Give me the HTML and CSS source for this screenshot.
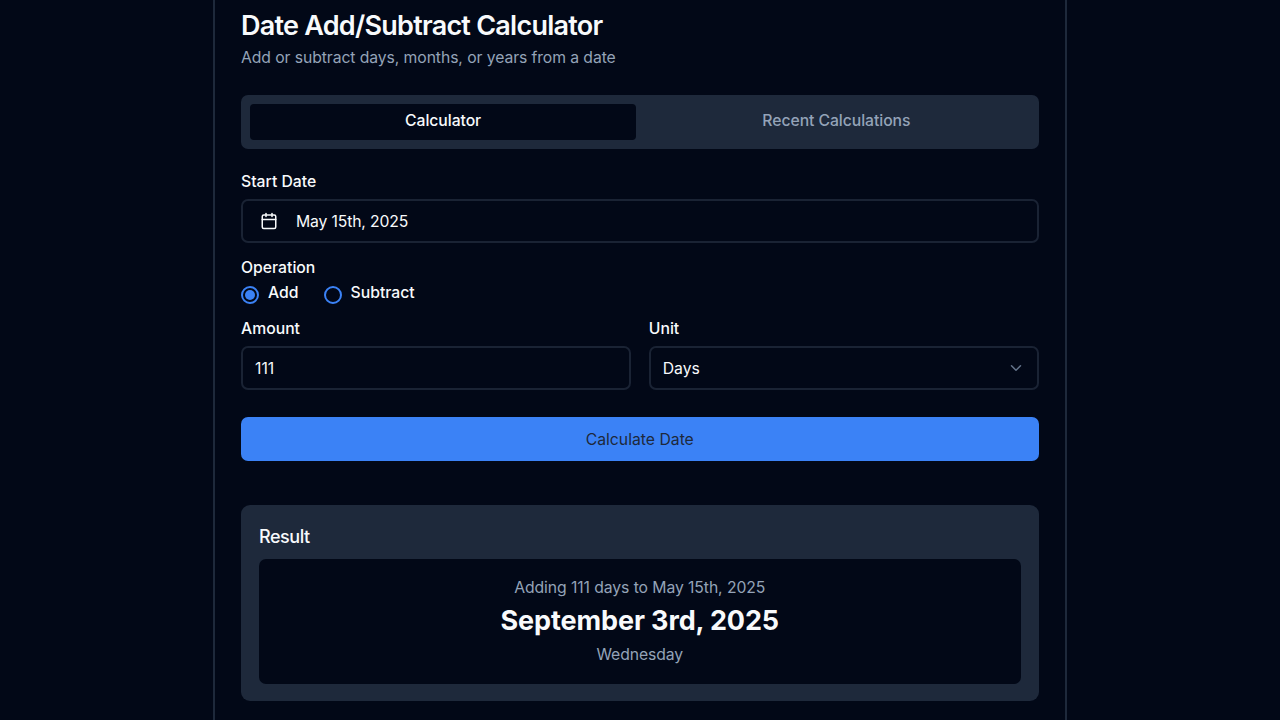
FILE: index.html
```html
<!DOCTYPE html>
<html lang="en">
<head>
    <meta charset="UTF-8">
    <meta name="viewport" content="width=device-width, initial-scale=1.0">
    <title>Date Add/Subtract Calculator</title>
    <link rel="stylesheet" href="styles.css">
</head>
<body>

    <div class="page">
        <h1>Date Add/Subtract Calculator</h1>
        <p class="subtitle">Add or subtract days, months, or years from a date</p>

        <!-- Tabs -->
        <div class="tabs">
            <button class="tab active">Calculator</button>
            <button class="tab">Recent Calculations</button>
        </div>

        <!-- Form -->
        <label class="field-label start-label">Start Date</label>
        <button class="date-btn">
            <svg class="icon" width="18" height="18" viewBox="0 0 24 24" fill="none" stroke="currentColor" stroke-width="2" stroke-linecap="round" stroke-linejoin="round">
                <path d="M8 2v4"></path>
                <path d="M16 2v4"></path>
                <rect x="3" y="4" width="18" height="18" rx="2"></rect>
                <path d="M3 10h18"></path>
            </svg>
            <span>May 15th, 2025</span>
        </button>

        <label class="field-label op-label">Operation</label>
        <div class="radios">
            <div class="radio-item">
                <span class="radio checked"></span>
                <span class="radio-text">Add</span>
            </div>
            <div class="radio-item">
                <span class="radio"></span>
                <span class="radio-text">Subtract</span>
            </div>
        </div>

        <div class="two-col">
            <div>
                <label class="field-label">Amount</label>
                <div class="input">111</div>
            </div>
            <div>
                <label class="field-label">Unit</label>
                <div class="input select">
                    <span>Days</span>
                    <svg class="chevron" width="18" height="18" viewBox="0 0 24 24" fill="none" stroke="currentColor" stroke-width="2" stroke-linecap="round" stroke-linejoin="round">
                        <path d="m6 9 6 6 6-6"></path>
                    </svg>
                </div>
            </div>
        </div>

        <button class="submit">Calculate Date</button>

        <!-- Result -->
        <div class="result">
            <h3>Result</h3>
            <div class="result-box">
                <p class="result-note">Adding 111 days to May 15th, 2025</p>
                <p class="result-date">September 3rd, 2025</p>
                <p class="result-day">Wednesday</p>
            </div>
        </div>
    </div>

</body>
</html>
```

FILE: styles.css
```css
/* General Styles */
* {
    box-sizing: border-box;
}

html, body {
    height: 720px;
    overflow: hidden;
}

body {
    font-family: 'Inter', sans-serif;
    background-color: #020817;
    color: #f8fafc;
    margin: 0;
    padding: 0;
}

.page {
    width: 854px;
    height: 720px;
    margin: 0 auto;
    padding: 10px 26.5px 0 26px;
    border-left: 2px solid #1e293b;
    border-right: 2px solid #1e293b;
}

h1 {
    font-size: 27px;
    line-height: 32px;
    font-weight: 600;
    letter-spacing: -0.75px;
    margin: 0;
}

.subtitle {
    font-size: 15.75px;
    line-height: 24px;
    letter-spacing: -0.09px;
    color: #94a3b8;
    margin: 4px 0 0;
}

/* Tabs */
.tabs {
    display: grid;
    grid-template-columns: 1fr 1fr;
    gap: 7px;
    height: 54px;
    margin-top: 25px;
    padding: 9px;
    background-color: #1e293b;
    border-radius: 7px;
}

.tab {
    font-family: inherit;
    font-size: 15.75px;
    font-weight: 500;
    letter-spacing: -0.07px;
    color: #94a3b8;
    background: none;
    border: none;
    border-radius: 4px;
    padding: 0 0 4px;
}

.tab.active {
    background-color: #020817;
    color: #f8fafc;
}

/* Form */
.field-label {
    display: block;
    font-size: 15.75px;
    line-height: 18px;
    font-weight: 500;
}

.start-label {
    margin-top: 24px;
}

.date-btn {
    display: flex;
    align-items: center;
    gap: 18px;
    width: 100%;
    height: 44px;
    margin-top: 8px;
    padding: 0 17px;
    font-family: inherit;
    font-size: 15.75px;
    font-weight: 400;
    letter-spacing: -0.15px;
    color: #f8fafc;
    background-color: #020817;
    border: 2px solid #1a2334;
    border-radius: 7px;
}

.op-label {
    margin-top: 16px;
}

.radios {
    display: flex;
    gap: 25px;
    margin-top: 7px;
}

.radio-item {
    display: flex;
    gap: 9px;
}

.radio {
    display: flex;
    align-items: center;
    justify-content: center;
    width: 18px;
    height: 18px;
    margin-top: 2px;
    border: 2px solid #3b82f6;
    border-radius: 50%;
}

.radio.checked::after {
    content: "";
    width: 10px;
    height: 10px;
    background-color: #3b82f6;
    border-radius: 50%;
}

.radio-text {
    font-size: 15.75px;
    line-height: 18px;
    font-weight: 500;
}

.two-col {
    display: grid;
    grid-template-columns: 1fr 1fr;
    gap: 18px;
    margin-top: 16px;
}

.input {
    display: flex;
    align-items: center;
    height: 44px;
    margin-top: 8px;
    padding: 0 12px;
    font-size: 15.75px;
    background-color: #020817;
    border: 2px solid #1a2334;
    border-radius: 7px;
}

.select {
    justify-content: space-between;
}

.chevron {
    color: #64748b;
}

.submit {
    display: block;
    width: 100%;
    height: 44px;
    margin-top: 27px;
    font-family: inherit;
    font-size: 15.75px;
    font-weight: 400;
    color: #1e293b;
    background-color: #3b82f6;
    border: none;
    border-radius: 7px;
}

/* Result */
.result {
    height: 196px;
    margin-top: 44px;
    padding: 18px;
    background-color: #1e293b;
    border-radius: 9px;
}

.result h3 {
    font-size: 18px;
    line-height: 28px;
    font-weight: 500;
    letter-spacing: -0.45px;
    margin: 0;
}

.result-box {
    height: 125px;
    margin-top: 8px;
    padding-top: 18px;
    text-align: center;
    background-color: #020817;
    border-radius: 7px;
}

.result-box p {
    margin: 0;
}

.result-note, .result-day {
    font-size: 15.75px;
    line-height: 22px;
    letter-spacing: -0.09px;
    color: #94a3b8;
}

.result-box .result-date {
    font-size: 27px;
    line-height: 36px;
    font-weight: 700;
    letter-spacing: -0.1px;
    margin: 4px 0 5px;
}
```
